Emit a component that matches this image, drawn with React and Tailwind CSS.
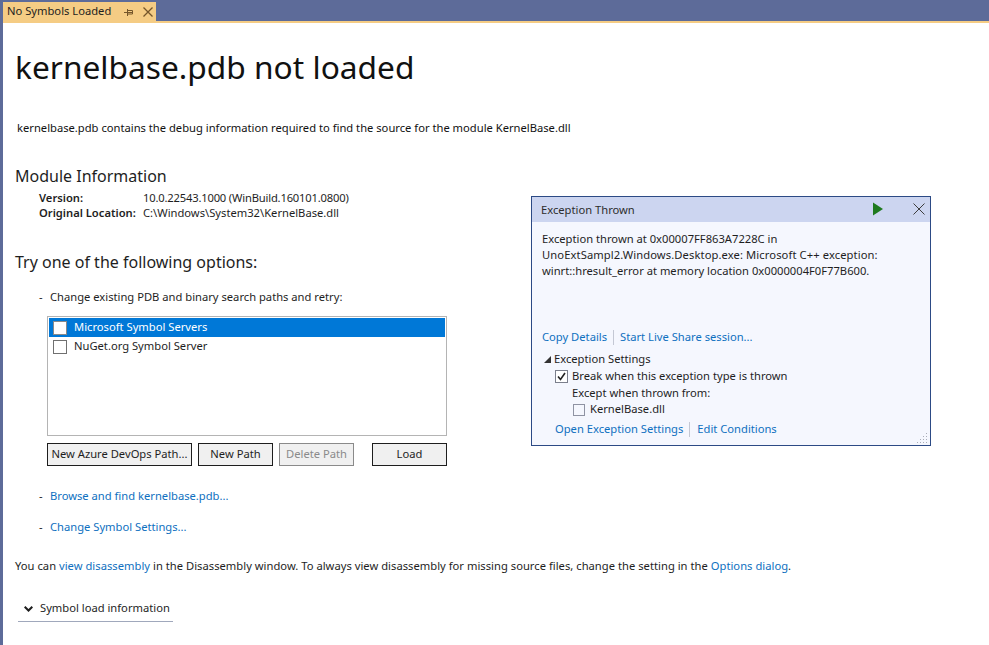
import React from "react";

const link = "text-[#0e70c0]";

function TabBar() {
  return (
    <div>
      <div className="h-[21px] bg-[#5d6b99] flex items-end pl-[3px]">
        <div className="h-[19px] w-[153px] bg-[#f5cc84] flex items-center pl-[4px] text-[#1e1e1e] whitespace-nowrap">
          <span className="w-[115px]">No Symbols Loaded</span>
          <svg width="10" height="10" viewBox="0 0 10 10" className="ml-[2px]" fill="none" stroke="#75562a">
            <path d="M0 5.500h3M3.500 2v7M3.500 3.500h5v3.500h-5M3.500 5.500h5" />
          </svg>
          <svg width="10" height="10" viewBox="0 0 10 10" className="ml-[9px]" fill="none" stroke="#75562a" strokeWidth="1.3">
            <path d="M0.500 0.500l9 9M9.500 0.500l-9 9" />
          </svg>
        </div>
      </div>
      <div className="h-[2px] bg-[#f5cc84] ml-[3px]"></div>
    </div>
  );
}

function ExceptionPopup() {
  return (
    <div className="absolute left-[531px] top-[196px] w-[400px] h-[250px] border border-[#2c4a85] bg-[#f5f7fe] text-[#1e1e1e] flex flex-col whitespace-nowrap">
      <div className="h-[25px] bg-[#ccd5f0] flex items-center pl-[9px] shrink-0">
        <span className="flex-1 text-[#2d2d2d] mt-[1px]">Exception Thrown</span>
        <svg width="12" height="14" viewBox="0 0 12 14" className="mr-[29px] -mt-[2px]">
          <path d="M1 0.500l10 6.500-10 6.500z" fill="#1e7a1e" />
        </svg>
        <svg width="12" height="12" viewBox="0 0 12 12" className="mr-[5px] -mt-[2px]" fill="none" stroke="#3d3d3d">
          <path d="M0.500 0.500l11 11M11.500 0.500l-11 11" />
        </svg>
      </div>
      <div className="pl-[10px] pt-[9px] leading-[16px] h-[101px] shrink-0">
        <div>Exception thrown at 0x00007FF863A7228C in</div>
        <div className="tracking-[0.1px]">UnoExtSampl2.Windows.Desktop.exe: Microsoft C++ exception:</div>
        <div>winrt::hresult_error at memory location 0x0000004F0F77B600.</div>
      </div>
      <div className="pl-[10px] flex items-center h-[16px] mt-[6px]">
        <span className={link}>Copy Details</span>
        <span className="w-px h-[15px] bg-[#c4c8d4] mx-[6px]"></span>
        <span className={link}>Start Live Share session...</span>
      </div>
      <div className="pl-[12px] flex items-center h-[17px] mt-[6px]">
        <svg width="7" height="7" viewBox="0 0 7 7"><path d="M7 0v7H0z" fill="#333" /></svg>
        <span className="ml-[3px]">Exception Settings</span>
      </div>
      <div className="pl-[23px] flex items-center h-[17px]">
        <span className="w-[13px] h-[13px] border border-[#7b7f8c] bg-white flex items-center justify-center">
          <svg width="9" height="9" viewBox="0 0 9 9" fill="none" stroke="#222" strokeWidth="1.6"><path d="M1 4.500l2.500 3L8 1" /></svg>
        </span>
        <span className="ml-[4px]">Break when this exception type is thrown</span>
      </div>
      <div className="pl-[40px] h-[16px] leading-[16px]">Except when thrown from:</div>
      <div className="pl-[41px] flex items-center h-[17px]">
        <span className="w-[12px] h-[12px] border border-[#8f93a3] bg-[#f5f7fe]"></span>
        <span className="ml-[5px]">KernelBase.dll</span>
      </div>
      <div className="pl-[23px] flex items-center h-[16px] mt-[3px]">
        <span className={link}>Open Exception Settings</span>
        <span className="w-px h-[15px] bg-[#c4c8d4] ml-[6px] mr-[7px]"></span>
        <span className={link}>Edit Conditions</span>
      </div>
      <svg width="12" height="12" viewBox="0 0 12 12" className="absolute right-[1px] bottom-[1px]" fill="#a9adb8">
        <rect x="9" y="1" width="1" height="1" />
        <rect x="6" y="4" width="1" height="1" /><rect x="9" y="4" width="1" height="1" />
        <rect x="3" y="7" width="1" height="1" /><rect x="6" y="7" width="1" height="1" /><rect x="9" y="7" width="1" height="1" />
        <rect x="0" y="10" width="1" height="1" /><rect x="3" y="10" width="1" height="1" /><rect x="6" y="10" width="1" height="1" /><rect x="9" y="10" width="1" height="1" />
      </svg>
    </div>
  );
}

function PathButton({ className, children, disabled }) {
  return (
    <div className={`h-[23px] border flex items-center justify-center whitespace-nowrap bg-[#f0f0f0] ${disabled ? "border-[#8a8a8a] text-[#8a8a8a]" : "border-[#1e1e1e] text-[#1e1e1e]"} ${className}`}>
      {children}
    </div>
  );
}

function Option({ className, children }) {
  return (
    <div className={`ml-[23px] flex leading-[16px] ${className}`}>
      <span className="w-[11px]">-</span>
      {children}
    </div>
  );
}

export default function App() {
  return (
    <div className="relative w-[989px] h-[645px] overflow-hidden bg-white text-[11.2px] text-[#1e1e1e] font-['Noto_Sans',sans-serif]">
      <TabBar />
      <div className="absolute left-0 top-0 bottom-0 w-[3px] bg-[#5d6b99]"></div>
      <div className="pl-[16px]">
        <h1 className="text-[31.7px] leading-[48px] mt-[20px] text-[#111] -ml-[1px]">kernelbase.pdb not loaded</h1>
        <p className="ml-[1px] mt-[29px] leading-[16px] text-[#111]">kernelbase.pdb contains the debug information required to find the source for the module KernelBase.dll</p>
        <h2 className="text-[16px] leading-[24px] mt-[28px] -ml-[1px]">Module Information</h2>
        <div className="ml-[23px] mt-[2px] leading-[15px]">
          <div className="flex"><b className="w-[104px] font-semibold">Version:</b><span className="tracking-[-0.18px]">10.0.22543.1000 (WinBuild.160101.0800)</span></div>
          <div className="flex"><b className="w-[104px] font-semibold">Original Location:</b><span>C:\Windows\System32\KernelBase.dll</span></div>
        </div>
        <h2 className="text-[16px] leading-[24px] mt-[30px] -ml-[1px]">Try one of the following options:</h2>
        <Option className="mt-[15px]">Change existing PDB and binary search paths and retry:</Option>
        <div className="ml-[31px] mt-[11px] w-[400px]">
          <div className="h-[120px] border border-[#b4b4b4] p-[1px]">
            <div className="h-[19px] bg-[#0078d7] text-white flex items-center pl-[4px]">
              <span className="w-[14px] h-[14px] border border-[#8a8a8a] bg-white"></span>
              <span className="ml-[7px]">Microsoft Symbol Servers</span>
            </div>
            <div className="h-[19px] flex items-center pl-[4px]">
              <span className="w-[14px] h-[14px] border border-[#707070] bg-white"></span>
              <span className="ml-[7px]">NuGet.org Symbol Server</span>
            </div>
          </div>
          <div className="flex mt-[7px]">
            <PathButton className="w-[145px]">New Azure DevOps Path...</PathButton>
            <PathButton className="w-[75px] ml-[6px]">New Path</PathButton>
            <PathButton className="w-[75px] ml-[6px]" disabled>Delete Path</PathButton>
            <PathButton className="w-[75px] ml-[18px]">Load</PathButton>
          </div>
        </div>
        <Option className="mt-[22px]"><span className={link}>Browse and find kernelbase.pdb...</span></Option>
        <Option className="mt-[15px]"><span className={link}>Change Symbol Settings...</span></Option>
        <p className="-ml-[1px] mt-[23px] leading-[16px] tracking-[0.02px]">
          You can <span className={link}>view disassembly</span> in the Disassembly window. To always view disassembly for missing source files, change the setting in the <span className={link}>Options dialog</span>.
        </p>
        <div className="ml-[2px] mt-[22px] w-[155px] h-[26px] border-b border-[#a0a8bc] flex items-center pl-[6px] whitespace-nowrap">
          <svg width="9" height="6" viewBox="0 0 9 6" fill="none" stroke="#1e1e1e" strokeWidth="2"><path d="M0.700 0.700l3.800 3.800 3.800-3.800" /></svg>
          <span className="ml-[7px]">Symbol load information</span>
        </div>
      </div>
      <ExceptionPopup />
    </div>
  );
}
